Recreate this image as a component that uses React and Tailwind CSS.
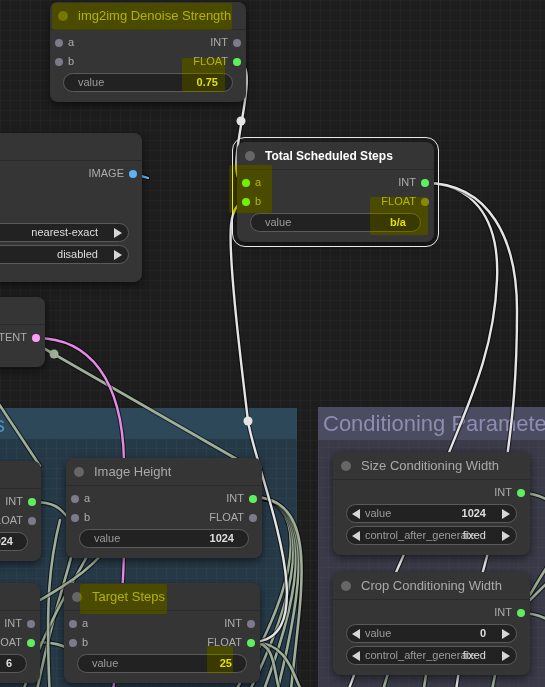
import React from 'react'

const GRAY = 'bg-[#7b7b8c]'
const GREEN = 'bg-[#5df05d]'
const BLUE = 'bg-[#5cb3f5]'
const PINK = 'bg-[#ff9cf9]'

const WHITE_WIRE = '#e4e4e4'
const GRAY_WIRE = '#9fae98'

function Dot({ color }) {
  return <span className={`block h-[8px] w-[8px] shrink-0 rounded-full ${color}`} />
}

function Slot({ input, inColor = GRAY, output, outColor = GRAY }) {
  return (
    <div className="flex h-[19px] items-center justify-between text-[11px] text-[#acacac]">
      {input ? (
        <div className="flex items-center">
          <span className="ml-[5px]">
            <Dot color={inColor} />
          </span>
          <span className="ml-[5px]">{input}</span>
        </div>
      ) : (
        <div />
      )}
      {output ? (
        <div className="flex items-center">
          <span>{output}</span>
          <span className="ml-[5px] mr-[5px]">
            <Dot color={outColor} />
          </span>
        </div>
      ) : (
        <div />
      )}
    </div>
  )
}

function Tri({ dir }) {
  return (
    <svg width="8" height="10" viewBox="0 0 8 10" className="shrink-0">
      <path d={dir === 'l' ? 'M8 0 L0 5 L8 10 Z' : 'M0 0 L8 5 L0 10 Z'} fill="#d6d6d6" />
    </svg>
  )
}

function Widget({ label, value, arrows = false, valueCls = 'font-bold text-[#dedede]', gap = 'mt-[2px]' }) {
  return (
    <div
      className={`mx-[13px] flex h-[19px] items-center rounded-full border border-[#5a5a5a] bg-[#222222] text-[11px] ${gap} ${
        arrows ? 'pl-[5px] pr-[6px]' : 'px-[14px]'
      }`}
    >
      {arrows && <Tri dir="l" />}
      <div className={`relative flex h-full flex-1 items-center ${arrows ? 'ml-[5px] mr-[16px]' : ''}`}>
        <span className="whitespace-nowrap text-[#9c9c9c]">{label}</span>
        <span className={`absolute right-0 whitespace-nowrap ${valueCls}`}>{value}</span>
      </div>
      {arrows && <Tri dir="r" />}
    </div>
  )
}

function Node({ pos, title, titleCls = 'text-[13px] text-[#a9a9a9]', selected = false, body = 'pb-[10px]', children }) {
  return (
    <div
      className={`absolute rounded-[8px] bg-[#353535] shadow-[0_3px_8px_rgba(0,0,0,0.55)] ${pos} ${
        selected ? 'outline outline-1 outline-offset-[4px] outline-[#e8e8e8]' : ''
      }`}
    >
      <div className="flex h-[28px] items-center border-b border-[#2a2a2a]">
        <span className="ml-[8px] h-[10px] w-[10px] shrink-0 rounded-full bg-[#666666]" />
        <span className={`ml-[10px] whitespace-nowrap ${titleCls}`}>{title}</span>
      </div>
      <div className={`pt-[3px] ${body}`}>{children}</div>
    </div>
  )
}

function Link({ d, color, w = 2.4 }) {
  return (
    <g>
      <path d={d} fill="none" stroke="rgba(0,0,0,0.55)" strokeWidth={w + 2.2} strokeLinecap="round" />
      <path d={d} fill="none" stroke={color} strokeWidth={w} strokeLinecap="round" />
    </g>
  )
}

const grayLinks = [
  'M45 349 L240 461',
  'M-5 398 L40 466',
  'M33 502 C60 502, 62 512, 72 522',
  'M31 642 C55 642, 62 645, 72 650',
  'M75 540 C70 570, 55 600, 35 700',
  'M95 540 C80 575, 50 610, 20 700',
  'M60 520 C50 560, 45 600, 50 700',
  'M110 545 C90 570, 70 585, -5 625',
  'M252 497 C300 497, 315 560, 230 700',
  'M252 497 C306 497, 311 570, 245 700',
  'M252 497 C312 497, 307 580, 260 700',
  'M252 497 C318 497, 303 590, 275 700',
  'M252 497 C324 497, 299 600, 290 700',
  'M251 642 C285 642, 290 665, 305 700',
  'M251 642 C278 642, 272 672, 282 700',
  'M520 493 C550 493, 560 510, 590 540',
  'M520 613 C550 613, 565 630, 590 660',
  'M600 500 C560 540, 545 570, 515 620',
  'M610 520 C575 555, 555 575, 530 600',
  'M600 640 C570 660, 560 680, 550 700',
  'M395 650 L380 700',
  'M430 650 L422 700',
  'M500 650 L490 700',
]

const marks = [
  'left-[52px] top-[3px] w-[180px] h-[27px]',
  'left-[182px] top-[58px] w-[43px] h-[34px]',
  'left-[229px] top-[165px] w-[43px] h-[48px]',
  'left-[370px] top-[197px] w-[58px] h-[38px]',
  'left-[80px] top-[584px] w-[87px] h-[30px]',
  'left-[207px] top-[646px] w-[26px] h-[27px]',
]

export default function App() {
  return (
    <div className="relative h-[687px] w-[545px] overflow-hidden bg-[#1d1d1d] bg-[linear-gradient(rgba(255,255,255,0.025)_1px,transparent_1px),linear-gradient(90deg,rgba(255,255,255,0.025)_1px,transparent_1px)] bg-[size:10px_10px] font-['Liberation_Sans',Arial,sans-serif]">
      {/* groups */}
      <div className="absolute left-[-164px] top-[408px] h-[300px] w-[461px] bg-[#263947] bg-[linear-gradient(rgba(255,255,255,0.025)_1px,transparent_1px),linear-gradient(90deg,rgba(255,255,255,0.025)_1px,transparent_1px)] bg-[size:10px_10px]">
        <div className="h-[31px] whitespace-nowrap bg-[#2d4859] pl-[4px] text-[22px] leading-[34px] text-[#4f8fbf]">
          Step Parameters
        </div>
      </div>
      <div className="absolute left-[318px] top-[407px] h-[300px] w-[240px] bg-[#3a3a48] bg-[linear-gradient(rgba(255,255,255,0.025)_1px,transparent_1px),linear-gradient(90deg,rgba(255,255,255,0.025)_1px,transparent_1px)] bg-[size:10px_10px]">
        <div className="h-[33px] whitespace-nowrap bg-[#4b4b62] pl-[5px] text-[22px] leading-[33px] text-[#8d8db0]">
          Conditioning Parameters
        </div>
      </div>

      {/* links */}
      <svg className="absolute left-0 top-0" width="545" height="687">
        {grayLinks.map((d, i) => (
          <Link key={i} d={d} color={GRAY_WIRE} w={2.6} />
        ))}
        <circle cx="54" cy="354" r="4.5" fill={GRAY_WIRE} />
        <Link d="M36 338 C90 338, 122 380, 124 460 C126 540, 124 600, 112 700" color="#e68ae6" />
        <Link d="M132 175 C140 175, 143 176, 148 178" color="#64b5f6" />
        <Link d="M237 62 C267 62, 216 183, 246 183" color={WHITE_WIRE} />
        <Link
          d="M251 642 C330 642, 255 470, 248 421 C242 370, 228 260, 231 225 C233 207, 239 202, 246 202"
          color={WHITE_WIRE}
        />
        <Link
          d="M425 183 C470 183, 500 215, 497 280 C494 350, 470 400, 450 450 C430 500, 380 600, 345 700"
          color={WHITE_WIRE}
        />
        <Link
          d="M425 183 C490 183, 517 240, 517 310 C517 380, 512 420, 508 450 C500 520, 485 560, 470 620 C462 650, 458 670, 455 700"
          color={WHITE_WIRE}
        />
        <circle cx="241" cy="121" r="4.5" fill={WHITE_WIRE} />
        <circle cx="248" cy="421" r="4.5" fill={WHITE_WIRE} />
      </svg>

      {/* nodes */}
      <Node pos="left-[50px] top-[2px] w-[196px]" title="img2img Denoise Strength">
        <Slot input="a" output="INT" />
        <Slot input="b" output="FLOAT" outColor={GREEN} />
        <Widget label="value" value="0.75" />
      </Node>

      <Node
        pos="left-[237px] top-[142px] w-[197px]"
        title="Total Scheduled Steps"
        titleCls="text-[12px] font-bold text-white"
        selected
      >
        <Slot input="a" inColor={GREEN} output="INT" outColor={GREEN} />
        <Slot input="b" inColor={GREEN} output="FLOAT" />
        <Widget label="value" value="b/a" />
      </Node>

      <Node pos="left-[-160px] top-[133px] w-[302px]" title="Upscale Image" body="pb-[18px]">
        <Slot input="image" output="IMAGE" outColor={BLUE} />
        <div className="h-[38px]" />
        <Widget label="upscale_method" value="nearest-exact" arrows valueCls="text-[#dedede]" />
        <Widget label="crop" value="disabled" arrows valueCls="text-[#dedede]" gap="mt-[3px]" />
      </Node>

      <Node pos="left-[-150px] top-[297px] w-[195px] h-[70px]" title="Empty Latent" body="pb-0">
        <Slot output="LATENT" outColor={PINK} />
      </Node>

      <Node pos="left-[-155px] top-[461px] w-[196px]" title="Image Width">
        <Slot input="a" output="INT" outColor={GREEN} />
        <Slot input="b" output="FLOAT" />
        <Widget label="value" value="1024" />
      </Node>

      <Node pos="left-[66px] top-[458px] w-[196px]" title="Image Height">
        <Slot input="a" output="INT" outColor={GREEN} />
        <Slot input="b" output="FLOAT" />
        <Widget label="value" value="1024" />
      </Node>

      <Node pos="left-[-156px] top-[583px] w-[196px]" title="Refiner Steps">
        <Slot input="a" output="INT" />
        <Slot input="b" output="FLOAT" outColor={GREEN} />
        <Widget label="value" value="6" />
      </Node>

      <Node pos="left-[64px] top-[583px] w-[196px]" title="Target Steps">
        <Slot input="a" output="INT" />
        <Slot input="b" output="FLOAT" outColor={GREEN} />
        <Widget label="value" value="25" />
      </Node>

      <Node pos="left-[333px] top-[452px] w-[197px]" title="Size Conditioning Width">
        <Slot output="INT" outColor={GREEN} />
        <Widget label="value" value="1024" arrows />
        <Widget label="control_after_generate" value="fixed" arrows valueCls="text-[#dedede]" gap="mt-[3px]" />
      </Node>

      <Node pos="left-[333px] top-[572px] w-[197px]" title="Crop Conditioning Width">
        <Slot output="INT" outColor={GREEN} />
        <Widget label="value" value="0" arrows />
        <Widget label="control_after_generate" value="fixed" arrows valueCls="text-[#dedede]" gap="mt-[3px]" />
      </Node>

      {/* marker highlights */}
      {marks.map((m, i) => (
        <React.Fragment key={i}>
          <div className={`absolute rounded-[2px] bg-[#ffff00] mix-blend-multiply ${m}`} />
          <div className={`absolute rounded-[2px] bg-[#1c1c00] mix-blend-screen ${m}`} />
        </React.Fragment>
      ))}
    </div>
  )
}
